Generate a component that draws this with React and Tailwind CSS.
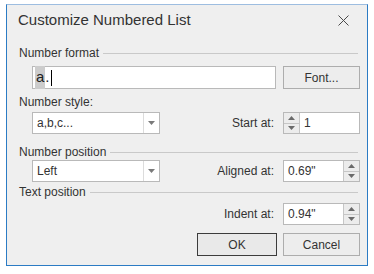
import React from "react";

function GroupHeader({ label }) {
  return (
    <div className="flex items-center h-[16px] mr-[2px]">
      <span>{label}</span>
      <div className="flex-1 h-px bg-[#c9c9c9] ml-[4px]" />
    </div>
  );
}

function Combo({ value }) {
  return (
    <div className="flex w-[128px] h-[22px] border border-[#b9b9b9] bg-white">
      <div className="flex-1 flex items-center pl-[4px]">{value}</div>
      <div className="w-[16px] border-l border-[#dcdcdc] flex items-center justify-center">
        <svg width="7" height="4" viewBox="0 0 7 4">
          <path d="M0 0 L7 0 L3.5 4 Z" fill="#7a7a7a" />
        </svg>
      </div>
    </div>
  );
}

function SpinButtons({ side }) {
  return (
    <div
      className={`w-[16px] flex flex-col bg-[#ececec] ${
        side === "left" ? "border-r" : "border-l"
      } border-[#c6c6c6]`}
    >
      <div className="flex-1 flex items-center justify-center border-b border-[#c6c6c6]">
        <svg width="7" height="4" viewBox="0 0 7 4">
          <path d="M0 4 L7 4 L3.5 0 Z" fill="#6a6a6a" />
        </svg>
      </div>
      <div className="flex-1 flex items-center justify-center">
        <svg width="7" height="4" viewBox="0 0 7 4">
          <path d="M0 0 L7 0 L3.5 4 Z" fill="#6a6a6a" />
        </svg>
      </div>
    </div>
  );
}

function Spin({ value, side }) {
  return (
    <div className="flex w-[77px] h-[22px] border border-[#b9b9b9] bg-white">
      {side === "left" && <SpinButtons side="left" />}
      <div className="flex-1 flex items-center pl-[4px]">{value}</div>
      {side === "right" && <SpinButtons side="right" />}
    </div>
  );
}

export default function App() {
  return (
    <div className="w-[374px] h-[274px] bg-white pt-[4px] pl-[6px] font-['Segoe_UI','Liberation_Sans',sans-serif] text-[12px] text-[#333333]">
      <div className="w-[362px] h-[262px] border border-[#2b7bc4] border-t-[#9dbde0] bg-[#efefef] flex flex-col pl-[12px] pr-[7px]">
        {/* title bar */}
        <div className="h-[30px] flex items-center justify-between">
          <span className="text-[15px] ml-[-1px]">Customize Numbered List</span>
          <svg width="11" height="11" viewBox="0 0 11 11" className="mr-[11px]">
            <path d="M0.5 0.5 L10.5 10.5 M10.5 0.5 L0.5 10.5" stroke="#4a4a4a" strokeWidth="1" />
          </svg>
        </div>

        <div className="mt-[10px]">
          <GroupHeader label="Number format" />
        </div>
        <div className="mt-[5px] flex h-[23px] pl-[13px] gap-[7px]">
          <div className="flex-1 border border-[#b9b9b9] bg-white flex items-center pl-[2px] text-[15px] text-[#222]">
            <span className="bg-[#cccccc] px-px">a</span>
            <span>.</span>
            <span className="w-px h-[16px] bg-black ml-px" />
          </div>
          <button className="w-[77px] border border-[#adadad] bg-[#ededed] text-[#333]">Font...</button>
        </div>

        <div className="mt-[5px] h-[16px] flex items-center">Number style:</div>
        <div className="mt-[2px] flex items-center h-[22px] pl-[13px]">
          <Combo value="a,b,c..." />
          <div className="flex-1 text-right pr-[9px]">Start at:</div>
          <Spin value="1" side="left" />
        </div>

        <div className="mt-[10px]">
          <GroupHeader label="Number position" />
        </div>
        <div className="flex items-center h-[22px] pl-[13px]">
          <Combo value="Left" />
          <div className="flex-1 text-right pr-[9px]">Aligned at:</div>
          <Spin value={'0.69"'} side="right" />
        </div>

        <div className="mt-[2px]">
          <GroupHeader label="Text position" />
        </div>
        <div className="mt-[3px] flex items-center h-[22px]">
          <div className="flex-1 text-right pr-[9px]">Indent at:</div>
          <Spin value={'0.94"'} side="right" />
        </div>

        <div className="mt-[8px] flex justify-end gap-[6px] h-[23px]">
          <button className="w-[80px] border border-[#3c3c3c] bg-[#e9e9e9] text-[#333]">OK</button>
          <button className="w-[77px] border border-[#adadad] bg-[#ededed] text-[#333]">Cancel</button>
        </div>
      </div>
    </div>
  );
}
